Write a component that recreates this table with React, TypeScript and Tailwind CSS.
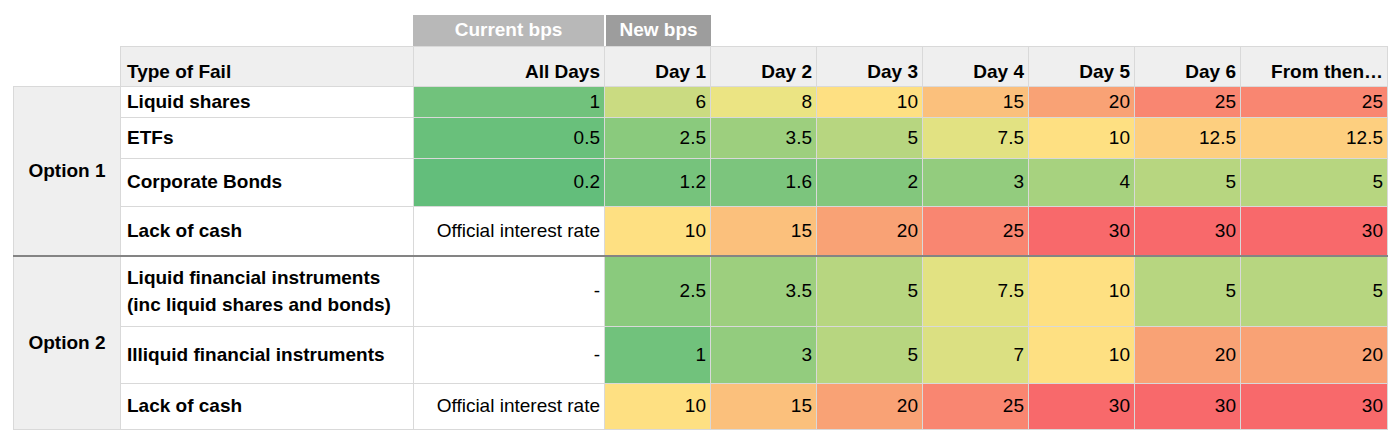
import React from "react";

const BG: Record<string, string> = {
  "0.2": "bg-[#63BE7B]",
  "0.5": "bg-[#69C07B]",
  "1": "bg-[#71C27C]",
  "1.2": "bg-[#76C37C]",
  "1.6": "bg-[#7CC57D]",
  "2": "bg-[#83C77D]",
  "2.5": "bg-[#8ACA7D]",
  "3": "bg-[#93CC7E]",
  "3.5": "bg-[#9DCF7E]",
  "4": "bg-[#A7D27F]",
  "5": "bg-[#B7D680]",
  "6": "bg-[#CADB81]",
  "7": "bg-[#DBE082]",
  "7.5": "bg-[#E2E282]",
  "8": "bg-[#EBE483]",
  "10": "bg-[#FEE082]",
  "12.5": "bg-[#FDCF7F]",
  "15": "bg-[#FBC07C]",
  "20": "bg-[#F9A275]",
  "25": "bg-[#F98671]",
  "30": "bg-[#F8696B]",
};

const cell = "border border-[#d9d9d9] px-[4px] text-right align-middle";
const label = "border border-[#d9d9d9] pl-[6px] pr-[4px] text-left font-bold align-middle";

type Row = {
  label: React.ReactNode;
  allDays: string;
  days: string[];
  h: string;
  sep?: boolean;
  option?: { text: string; span: number };
};

const rows: Row[] = [
  {
    label: "Liquid shares",
    allDays: "1",
    days: ["6", "8", "10", "15", "20", "25", "25"],
    h: "h-[31px]",
    option: { text: "Option 1", span: 4 },
  },
  { label: "ETFs", allDays: "0.5", days: ["2.5", "3.5", "5", "7.5", "10", "12.5", "12.5"], h: "h-[41px]" },
  { label: "Corporate Bonds", allDays: "0.2", days: ["1.2", "1.6", "2", "3", "4", "5", "5"], h: "h-[48px]" },
  { label: "Lack of cash", allDays: "Official interest rate", days: ["10", "15", "20", "25", "30", "30", "30"], h: "h-[49px]" },
  {
    label: (
      <span className="block leading-[27px]">
        Liquid financial instruments
        <br />
        (inc liquid shares and bonds)
      </span>
    ),
    allDays: "-",
    days: ["2.5", "3.5", "5", "7.5", "10", "5", "5"],
    h: "h-[71px]",
    sep: true,
    option: { text: "Option 2", span: 3 },
  },
  { label: "Illiquid financial instruments", allDays: "-", days: ["1", "3", "5", "7", "10", "20", "20"], h: "h-[57px]" },
  { label: "Lack of cash", allDays: "Official interest rate", days: ["10", "15", "20", "25", "30", "30", "30"], h: "h-[46px]" },
];

const headers = ["Day 1", "Day 2", "Day 3", "Day 4", "Day 5", "Day 6", "From then\u2026"];

export default function App() {
  return (
    <div
      className="w-[1400px] h-[445px] bg-white pt-[15px] pl-[13px] text-[19px] text-black overflow-hidden"
      style={{ fontFamily: '"Liberation Sans", Arial, sans-serif' }}
    >
      <div className="flex h-[31px]">
        <div className="w-[400px]" />
        <div className="w-[191px] bg-[#b8b8b8] text-white font-bold flex items-center justify-center">Current bps</div>
        <div className="ml-[2px] w-[105px] bg-[#9d9d9d] text-white font-bold flex items-center justify-center">New bps</div>
      </div>
      <table className="border-collapse table-fixed w-[1374px]">
        <colgroup>
          <col className="w-[107px]" />
          <col className="w-[293px]" />
          <col className="w-[191px]" />
          <col className="w-[106px]" />
          <col className="w-[106px]" />
          <col className="w-[106px]" />
          <col className="w-[106px]" />
          <col className="w-[106px]" />
          <col className="w-[106px]" />
          <col className="w-[147px]" />
        </colgroup>
        <tbody>
          <tr className="h-[40px]">
            <td className="border-0" />
            <td className="border border-[#d9d9d9] bg-[#efefef] pl-[6px] pb-0 text-left font-bold align-bottom">Type of Fail</td>
            <td className="border border-[#d9d9d9] bg-[#efefef] pr-[4px] pb-0 text-right font-bold align-bottom">All Days</td>
            {headers.map((h) => (
              <td key={h} className="border border-[#d9d9d9] bg-[#efefef] pr-[4px] pb-0 text-right font-bold align-bottom whitespace-nowrap">
                {h}
              </td>
            ))}
          </tr>
          {rows.map((r, i) => (
            <tr key={i} className={r.h}>
              {r.option && (
                <td
                  rowSpan={r.option.span}
                  className={`border border-[#d9d9d9] bg-[#efefef] text-center font-bold align-middle ${
                    r.sep ? "border-t-2 border-t-[#848484]" : ""
                  }`}
                >
                  {r.option.text}
                </td>
              )}
              <td className={`${label} bg-white ${r.sep ? "border-t-2 border-t-[#848484]" : ""}`}>{r.label}</td>
              <td className={`${cell} ${BG[r.allDays] ?? "bg-white"} ${r.sep ? "border-t-2 border-t-[#848484]" : ""}`}>
                {r.allDays}
              </td>
              {r.days.map((d, j) => (
                <td key={j} className={`${cell} ${BG[d]} ${r.sep ? "border-t-2 border-t-[#848484]" : ""}`}>
                  {d}
                </td>
              ))}
            </tr>
          ))}
        </tbody>
      </table>
    </div>
  );
}
